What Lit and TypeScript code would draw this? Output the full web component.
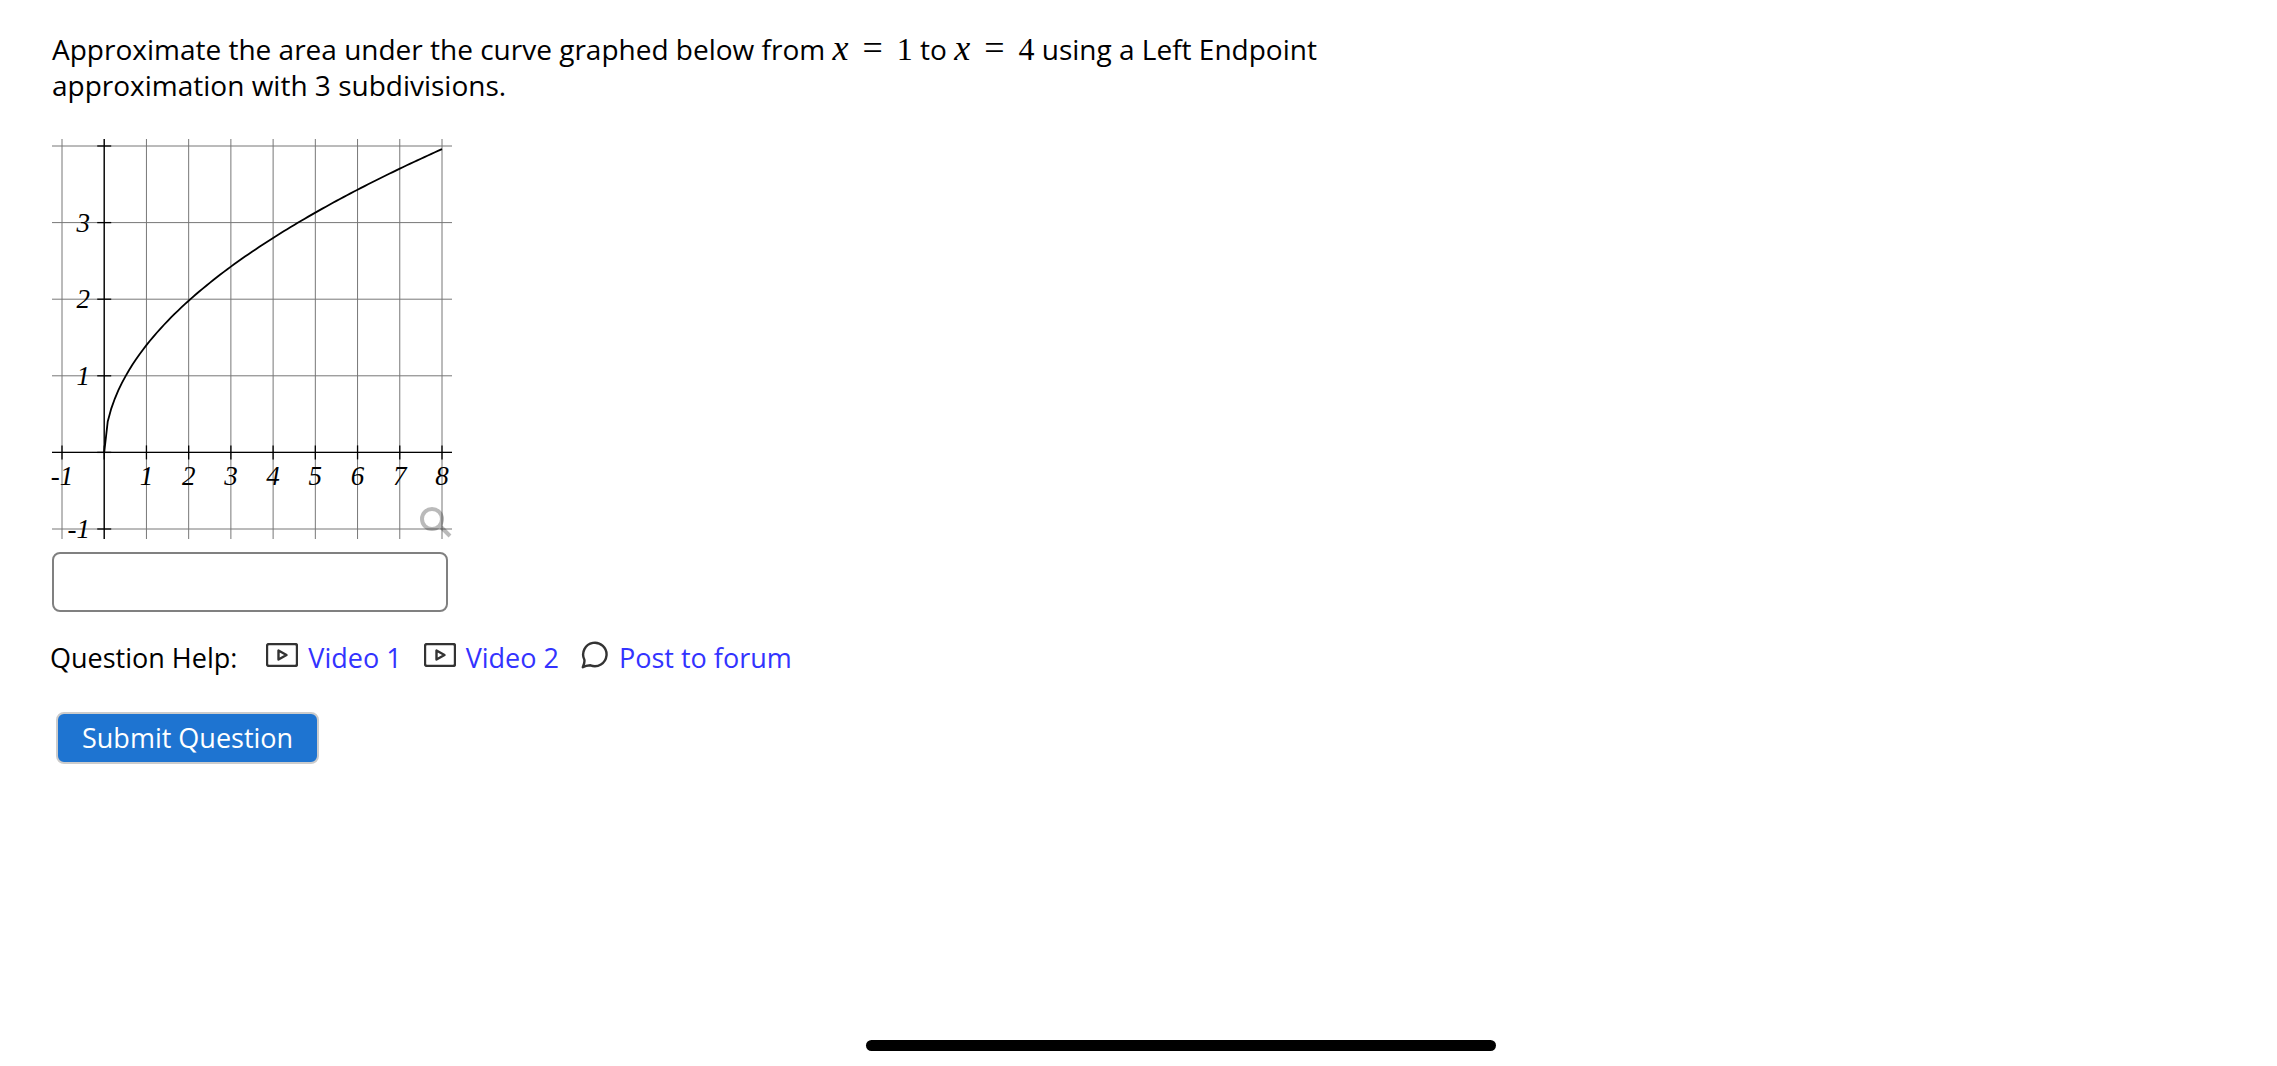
import { LitElement, html, svg, css } from "lit";
import { customElement } from "lit/decorators.js";

const SIZE = 400;
const px = (x: number) => 10 + ((x + 1) * 380) / 9;
const py = (y: number) => 390 - ((y + 1) * 383) / 5;
const f = (x: number) => 1.4 * Math.sqrt(x);
const range = (a: number, b: number) => Array.from({ length: b - a + 1 }, (_, i) => a + i);

@customElement("curve-graph")
export class CurveGraph extends LitElement {
  static styles = css`
    :host { display: block; }
    .graph { display: block; width: 400px; height: 400px; overflow: visible; }
    .grid { stroke: #777; stroke-width: 1; }
    .axis { stroke: #000; stroke-width: 1.3; }
    .curve { fill: none; stroke: #000; stroke-width: 1.8; }
    .label { font: italic 27px "Liberation Serif", "Times New Roman", serif; fill: #000; }
    .mid { text-anchor: middle; }
    .end { text-anchor: end; }
    .zoom { fill: none; stroke: #000; stroke-width: 4; opacity: 0.27; }
  `;

  render() {
    const xs = range(-1, 8);
    const ys = range(-1, 4);
    const points = range(0, 96)
      .map((i) => (i * 8) / 96)
      .map((x) => `${px(x).toFixed(2)},${py(f(x)).toFixed(2)}`)
      .join(" ");
    return html`
      <svg class="graph" viewBox="0 0 400 400" role="img" aria-label="Graph of the curve">
        <g class="grid">
          ${xs.map((x) => svg`<line x1=${px(x)} x2=${px(x)} y1="0" y2=${SIZE}></line>`)}
          ${ys.map((y) => svg`<line x1="0" x2=${SIZE} y1=${py(y)} y2=${py(y)}></line>`)}
        </g>
        <g class="axis">
          <line x1=${px(0)} x2=${px(0)} y1="0" y2=${SIZE}></line>
          <line x1="0" x2=${SIZE} y1=${py(0)} y2=${py(0)}></line>
          ${xs.map((x) => svg`<line x1=${px(x)} x2=${px(x)} y1=${py(0) - 7} y2=${py(0) + 7}></line>`)}
          ${ys.map((y) => svg`<line x1=${px(0) - 7} x2=${px(0) + 7} y1=${py(y)} y2=${py(y)}></line>`)}
        </g>
        ${xs
          .filter((x) => x !== 0)
          .map((x) => svg`<text class="label mid" x=${px(x)} y="346">${x}</text>`)}
        ${ys
          .filter((y) => y !== 0 && y !== 4)
          .map((y) => svg`<text class="label end" x="38" y=${py(y) + 9}>${y}</text>`)}
        <polyline class="curve" points=${points}></polyline>
        <path class="zoom" d="M370 380a10 10 0 1 0 20 0a10 10 0 1 0 -20 0M388 387L398 397"></path>
      </svg>
    `;
  }
}

const videoIcon = html`
  <svg class="icon" width="32" height="24" viewBox="0 0 32 24" aria-hidden="true">
    <rect x="1" y="1" width="30" height="22" rx="2"></rect>
    <path d="M12.5 7.5v9l8-4.500z"></path>
  </svg>
`;

const forumIcon = html`
  <svg class="icon" width="28" height="28" viewBox="0 0 28 28" aria-hidden="true">
    <path d="M1.800 26.200C3 23.500 4 21.500 3.300 18.500A11.700 11.700 0 1 1 9.500 24.300C6.500 24.500 4 25 1.800 26.200z"></path>
  </svg>
`;

@customElement("app-root")
export class AppRoot extends LitElement {
  static styles = css`
    :host {
      display: flex;
      flex-direction: column;
      box-sizing: border-box;
      min-height: 100vh;
      padding: 31px 52px 15px;
      background: #fff;
      color: #000;
      font: 27px/36px "Open Sans", sans-serif;
    }
    .question {
      display: flex;
      flex-direction: column;
      align-items: flex-start;
      max-width: 1340px;
    }
    .prompt { margin: 0 0 36px; font-size: 28px; }
    .math {
      font: 32px "Liberation Serif", serif;
      line-height: 0;
      white-space: nowrap;
    }
    .var { font-size: 36px; }
    .rel { margin: 0 14px; font-size: 36px; }
    .answer {
      box-sizing: border-box;
      width: 396px;
      height: 60px;
      margin: 13px 0 0;
      padding: 0 12px;
      border: 2px solid #808080;
      border-radius: 8px;
      font: inherit;
    }
    .help {
      display: flex;
      align-items: center;
      gap: 22px;
      margin: 28px 0 0 -2px;
    }
    .help-label { padding-right: 7px; }
    .link {
      display: flex;
      align-items: center;
      gap: 10px;
      color: #3333ff;
      text-decoration: none;
    }
    .icon {
      fill: none;
      stroke: #333;
      stroke-width: 2.400;
      stroke-linejoin: round;
      margin-bottom: 6px;
    }
    .submit {
      height: 52px;
      margin: 36px 0 0 4px;
      padding: 0 24px;
      border: 2px solid #ccc;
      border-radius: 8px;
      background: #1e74d1;
      color: #fff;
      font: inherit;
    }
    .dock {
      display: flex;
      justify-content: center;
      margin-top: auto;
      padding-left: 84px;
    }
    .indicator {
      width: 630px;
      height: 11px;
      border-radius: 6px;
      background: #000;
    }
  `;

  render() {
    return html`
      <main class="question">
        <p class="prompt">
          Approximate the area under the curve graphed below from
          <span class="math"><i class="var">x</i><span class="rel">=</span>1</span> to
          <span class="math"><i class="var">x</i><span class="rel">=</span>4</span> using a Left
          Endpoint approximation with 3 subdivisions.
        </p>
        <curve-graph></curve-graph>
        <input class="answer" type="text" aria-label="Answer" />
        <div class="help">
          <span class="help-label">Question Help:</span>
          <a class="link" href="#video-1">${videoIcon}Video 1</a>
          <a class="link" href="#video-2">${videoIcon}Video 2</a>
          <a class="link" href="#forum">${forumIcon}Post to forum</a>
        </div>
        <button class="submit" type="button">Submit Question</button>
      </main>
      <div class="dock"><div class="indicator"></div></div>
    `;
  }
}
